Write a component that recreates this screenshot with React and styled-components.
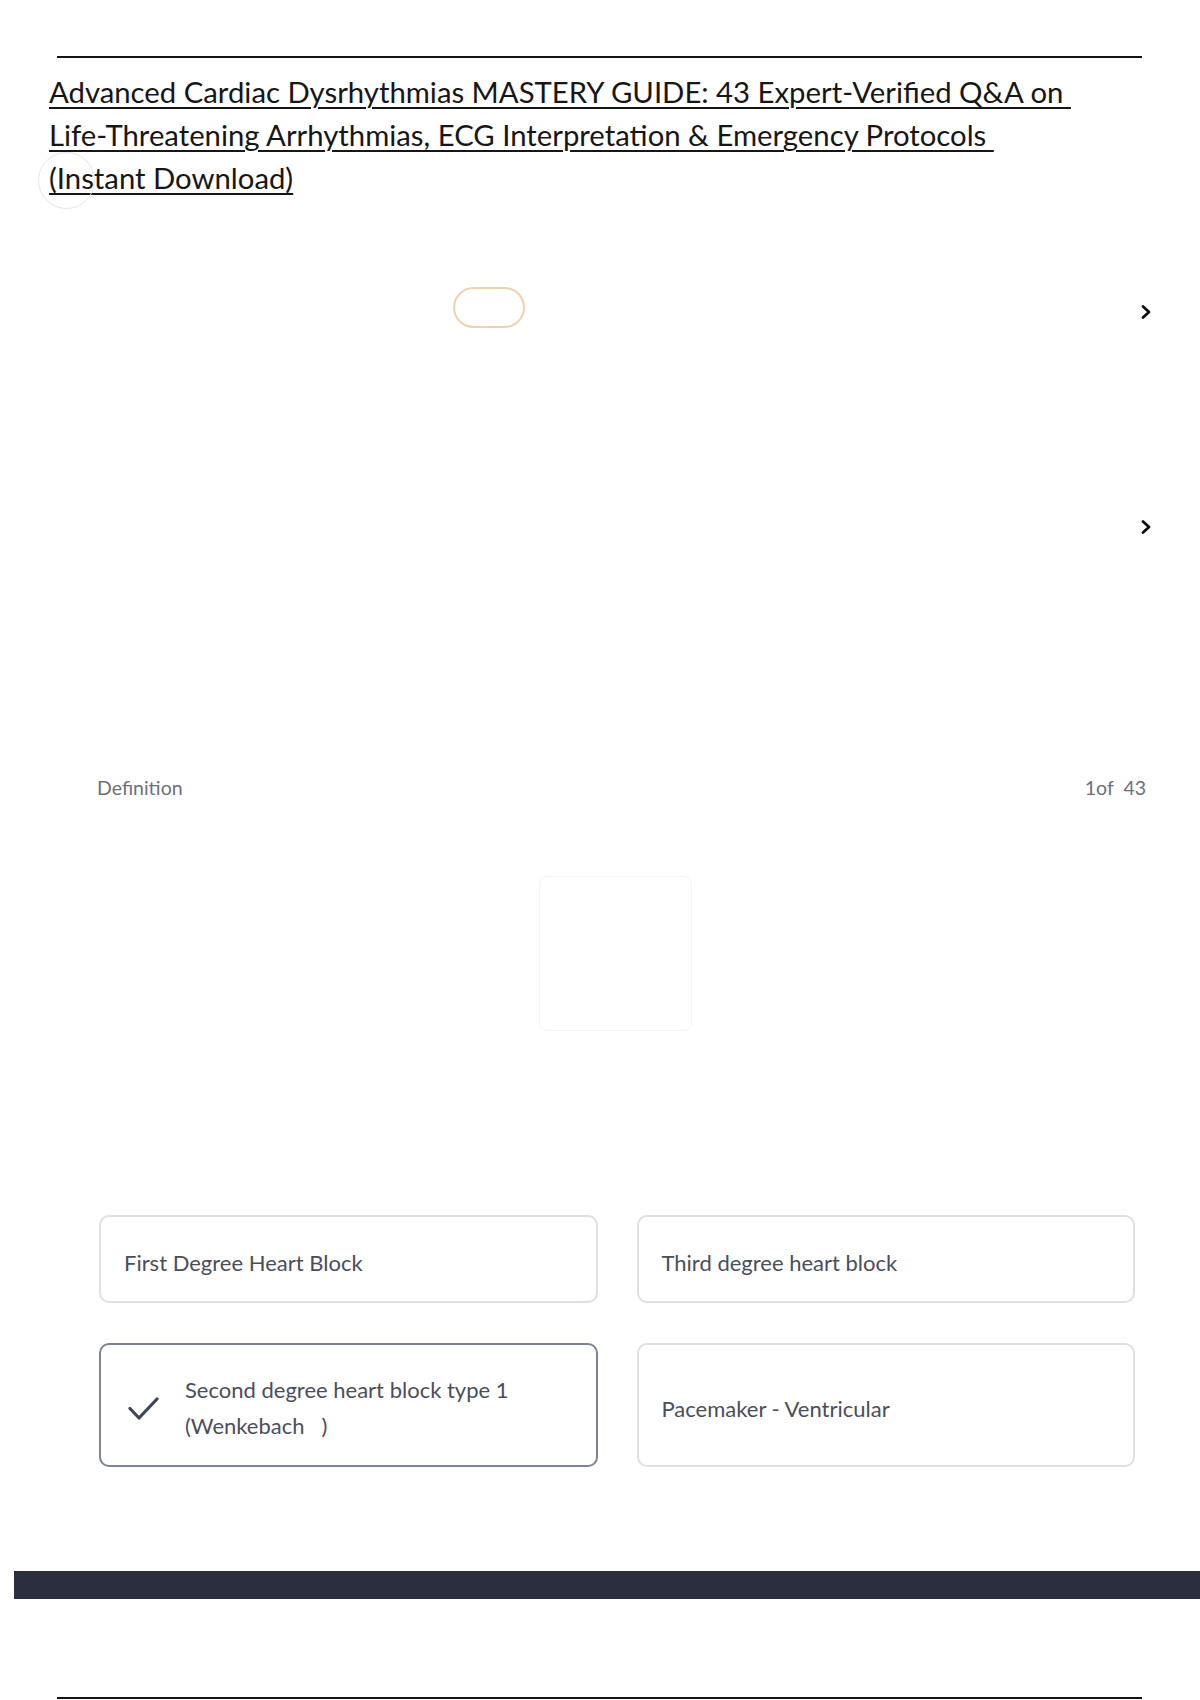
import React from "react";
import styled, { createGlobalStyle } from "styled-components";

const Global = createGlobalStyle`
  html, body { margin: 0; padding: 0; background: #ffffff; }
  body { font-family: Lato, "Open Sans", sans-serif; }
  * { box-sizing: border-box; }
`;

const Page = styled.div`
  position: relative;
  width: 1200px;
  height: 1700px;
  display: flex;
  flex-direction: column;
  overflow: hidden;
  background: #ffffff;
`;

const Rule = styled.div`
  height: 2px;
  margin: ${(p) => p.$top}px 58px 0 57px;
  background: #141414;
`;

const Title = styled.h1`
  margin: 12px 0 0 0;
  padding: 0 30px 0 49px;
  font-family: Lato, "Open Sans", sans-serif;
  font-weight: 400;
  font-size: 29.3px;
  line-height: 43px;
  color: #161616;
  letter-spacing: 0;
`;

const TitleLine = styled.span`
  display: block;
  white-space: pre;
  text-decoration: underline;
  text-decoration-thickness: 2px;
  text-underline-offset: 4px;
`;

const GhostCircle = styled.div`
  position: absolute;
  left: 38px;
  top: 152px;
  width: 57px;
  height: 57px;
  border-radius: 50%;
  border: 1px solid #e6e6e8;
`;

const PillRow = styled.div`
  display: flex;
  align-items: flex-start;
  justify-content: space-between;
  height: 40px;
  margin-top: 88px;
  padding: 0 48px 0 453px;
`;

const Pill = styled.div`
  width: 72px;
  height: 41px;
  border-radius: 21px;
  border: 2px solid #efd2ab;
`;

const ChevronWrap = styled.div`
  display: flex;
  margin-top: ${(p) => p.$offset || 0}px;
  width: 12px;
  height: 16px;
`;

const ChevronRow = styled.div`
  display: flex;
  justify-content: flex-end;
  height: 16px;
  margin-top: 192px;
  padding-right: 48px;
`;

const MetaRow = styled.div`
  display: flex;
  justify-content: space-between;
  align-items: center;
  margin-top: 242px;
  padding: 0 54px 0 97px;
  font-size: 19.5px;
  line-height: 22px;
  color: #6c707c;
`;

const FaintBox = styled.div`
  width: 153px;
  height: 155px;
  margin: 77px 0 0 539px;
  border: 1px solid #f6f4f7;
  border-radius: 8px;
`;

const Options = styled.div`
  display: grid;
  grid-template-columns: 1fr 1fr;
  column-gap: 39px;
  row-gap: 40px;
  margin-top: 184px;
  padding: 0 65px 0 99px;
`;

const Option = styled.div`
  display: flex;
  align-items: center;
  gap: 26px;
  min-height: ${(p) => p.$h}px;
  padding: ${(p) => (p.$selected ? "6px 20px 0 27px" : "8px 20px 0 23px")};
  border: 2px solid ${(p) => (p.$selected ? "#7d8395" : "#dfe0e5")};
  border-radius: 10px;
  font-size: 22px;
  line-height: 36px;
  color: #4a4e5b;
`;

const OptionText = styled.span`
  white-space: pre-line;
`;

const DarkBar = styled.div`
  height: 28px;
  margin: 104px 0 0 14px;
  background: #2b2e3e;
`;

const Chevron = () => (
  <svg width="12" height="16" viewBox="0 0 12 16" fill="none">
    <polyline
      points="3,2.5 9,8 3,13.5"
      stroke="#111"
      strokeWidth="2.8"
      strokeLinecap="round"
      strokeLinejoin="round"
    />
  </svg>
);

const Check = () => (
  <svg width="31" height="25" viewBox="0 0 31 25" fill="none">
    <polyline
      points="2,12.5 11,22 29,3"
      stroke="#3f4659"
      strokeWidth="3.2"
      strokeLinecap="round"
      strokeLinejoin="round"
    />
  </svg>
);

const options = [
  { text: "First Degree Heart Block", h: 88 },
  { text: "Third degree heart block", h: 88 },
  { text: "Second degree heart block type 1\n(Wenkebach\u00a0\u00a0\u00a0)", h: 124, selected: true },
  { text: "Pacemaker - Ventricular", h: 124 },
];

export default function App() {
  return (
    <>
      <Global />
      <Page>
        <Rule $top={56} />
        <Title>
          <TitleLine>Advanced Cardiac Dysrhythmias MASTERY GUIDE: 43 Expert-Verified Q&amp;A on </TitleLine>
          <TitleLine>Life-Threatening Arrhythmias, ECG Interpretation &amp; Emergency Protocols </TitleLine>
          <TitleLine>(Instant Download)</TitleLine>
        </Title>
        <GhostCircle />
        <PillRow>
          <Pill />
          <ChevronWrap $offset={17}>
            <Chevron />
          </ChevronWrap>
        </PillRow>
        <ChevronRow>
          <ChevronWrap>
            <Chevron />
          </ChevronWrap>
        </ChevronRow>
        <MetaRow>
          <span>Definition</span>
          <span>1of&nbsp;&nbsp;43</span>
        </MetaRow>
        <FaintBox />
        <Options>
          {options.map((o) => (
            <Option key={o.text} $h={o.h} $selected={o.selected}>
              {o.selected && <Check />}
              <OptionText>{o.text}</OptionText>
            </Option>
          ))}
        </Options>
        <DarkBar />
        <Rule $top={98} />
      </Page>
    </>
  );
}
